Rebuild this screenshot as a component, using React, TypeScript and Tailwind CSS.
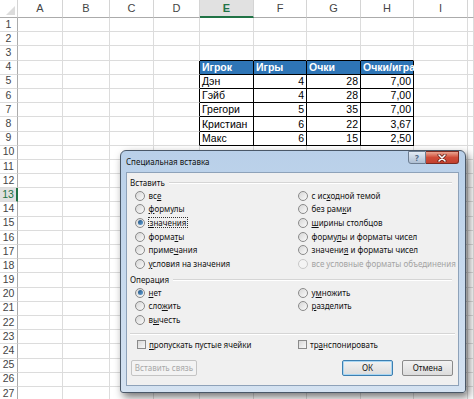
import React from "react";

const cols = ["A", "B", "C", "D", "E", "F", "G", "H", "I", ""];
const rows = Array.from({ length: 27 }, (_, i) => i + 1);

const table: Record<number, string[]> = {
  4: ["Игрок", "Игры", "Очки", "Очки/игра"],
  5: ["Дэн", "4", "28", "7,00"],
  6: ["Гэйб", "4", "28", "7,00"],
  7: ["Грегори", "5", "35", "7,00"],
  8: ["Кристиан", "6", "22", "3,67"],
  9: ["Макс", "6", "15", "2,50"],
};

function Cell({ r, c }: { r: number; c: number }) {
  const row = table[r];
  const inTable = !!row && c >= 4 && c <= 7;
  const text = inTable ? row[c - 4] : "";
  const rightBlack = r >= 4 && r <= 9 && c >= 3 && c <= 7;
  const bottomBlack = c >= 4 && c <= 7 && r >= 3 && r <= 9;
  const head = r === 4 && inTable;
  const left = c === 4 || head;

  return (
    <div
      className={[
        "flex items-center overflow-visible whitespace-nowrap border-r border-b px-[2px] text-[10.5px] leading-none",
        rightBlack ? "border-r-black" : "border-r-[#dcdcdc]",
        bottomBlack ? "border-b-black" : "border-b-[#dcdcdc]",
        head ? "bg-[#2e75b6] font-bold text-white" : "text-black",
        left ? "justify-start" : "justify-end",
      ].join(" ")}
    >
      {text}
    </div>
  );
}

function Radio({ checked, disabled }: { checked?: boolean; disabled?: boolean }) {
  return (
    <span
      className={[
        "flex size-[10px] shrink-0 items-center justify-center rounded-full border",
        disabled
          ? "border-[#c8c8c8] bg-[#f4f4f4]"
          : "border-[#8a8a8a] bg-gradient-to-br from-[#d6d6d6] to-[#fbfbfb]",
      ].join(" ")}
    >
      {checked && (
        <span className="size-[5px] rounded-full bg-gradient-to-br from-[#1c4f7e] to-[#6aa7da]" />
      )}
    </span>
  );
}

function Option({
  children,
  checked,
  disabled,
}: {
  children: React.ReactNode;
  checked?: boolean;
  disabled?: boolean;
}) {
  return (
    <div className="flex h-[13.6px] items-center gap-[3.5px] whitespace-nowrap">
      <Radio checked={checked} disabled={disabled} />
      <span className={disabled ? "text-[#a3a3a3]" : "text-[#111]"}>{children}</span>
    </div>
  );
}

function Check({ children }: { children: React.ReactNode }) {
  return (
    <div className="flex h-[12px] items-center gap-[3px] whitespace-nowrap">
      <span className="size-[9px] shrink-0 border border-[#8a8a8a] bg-gradient-to-br from-[#d8d8d8] to-[#f8f8f8]" />
      <span className="text-[#111]">{children}</span>
    </div>
  );
}

function GroupLabel({ children }: { children: React.ReactNode }) {
  return (
    <div className="flex h-[12px] items-center pl-[3px] pr-[6px]">
      <span className="text-[#111]">{children}</span>
      <span className="ml-[4px] h-[2px] flex-1 border-t border-b border-t-[#d5d5d5] border-b-white" />
    </div>
  );
}

function PasteSpecial() {
  return (
    <div className="absolute top-[150px] left-[120px] flex h-[243px] w-[346px] flex-col rounded-t-[6px] rounded-b-[3px] border border-[#4a5868] bg-gradient-to-b from-[#b9d0e9] to-[#d4e2f1] font-['Noto_Sans',sans-serif] text-[8px] shadow-[3px_4px_8px_rgba(0,0,0,0.55)]">
      {/* заголовок */}
      <div className="flex h-[21px] shrink-0">
        <span className="self-center pt-[1px] pl-[5px] text-[8px] text-[#111]">Специальная вставка</span>
        <div className="mr-[6px] ml-auto flex h-[13px]">
          <div className="flex w-[18px] items-center justify-center rounded-bl-[3px] border border-[#6c7d91] bg-gradient-to-b from-[#e3ebf5] to-[#aebfd3] text-[8px] font-bold text-[#4a6584]">
            ?
          </div>
          <div className="flex w-[33px] items-center justify-center rounded-br-[3px] border border-l-0 border-[#7b2a20] bg-gradient-to-b from-[#e9a491] via-[#cf4b38] to-[#c2402e]">
            <svg width="10" height="8" viewBox="0 0 10 8">
              <path d="M2 1 L8 7 M8 1 L2 7" stroke="#5a1a12" strokeWidth="3" strokeLinecap="round" />
              <path d="M2 1 L8 7 M8 1 L2 7" stroke="#fff" strokeWidth="1.6" strokeLinecap="round" />
            </svg>
          </div>
        </div>
      </div>

      {/* содержимое */}
      <div className="mr-[6px] mb-[6px] ml-[5px] flex flex-1 flex-col border border-[#8ea2b9] bg-[#f0f0f0]">
        <div className="mt-[4px]">
          <GroupLabel>Вставить</GroupLabel>
        </div>
        <div className="grid grid-cols-[163px_1fr] pl-[8px]">
          <div>
            <Option>
              вс<u>е</u>
            </Option>
            <Option>
              <u>ф</u>ормулы
            </Option>
            <div className="flex h-[13.6px] items-center gap-[2.5px]">
              <Radio checked />
              <span className="border border-dotted border-[#333] px-[1px] leading-[9px] text-[#111]">
                <u>з</u>начения
              </span>
            </div>
            <Option>
              форма<u>т</u>ы
            </Option>
            <Option>
              приме<u>ч</u>ания
            </Option>
            <Option>
              <u>у</u>словия на значения
            </Option>
          </div>
          <div>
            <Option>
              с ис<u>х</u>одной темой
            </Option>
            <Option>
              без рам<u>к</u>и
            </Option>
            <Option>
              <u>ш</u>ирины столбцов
            </Option>
            <Option>
              форму<u>л</u>ы и форматы чисел
            </Option>
            <Option>
              значени<u>я</u> и форматы чисел
            </Option>
            <Option disabled>все условные форматы объединения</Option>
          </div>
        </div>

        <div className="mt-[3.4px]">
          <GroupLabel>Операция</GroupLabel>
        </div>
        <div className="grid grid-cols-[163px_1fr] pl-[8px]">
          <div>
            <Option checked>
              <u>н</u>ет
            </Option>
            <Option>
              сло<u>ж</u>ить
            </Option>
            <Option>
              в<u>ы</u>честь
            </Option>
          </div>
          <div>
            <Option>
              у<u>м</u>ножить
            </Option>
            <Option>
              <u>р</u>азделить
            </Option>
          </div>
        </div>

        <div className="mx-[3px] mt-[6px] h-[2px] border-t border-b border-t-[#d5d5d5] border-b-white" />

        <div className="mt-[4px] grid grid-cols-[161px_1fr] pl-[10px]">
          <Check>
            <u>п</u>ропускать пустые ячейки
          </Check>
          <Check>
            тр<u>а</u>нспонировать
          </Check>
        </div>

        <div className="mt-[9px] flex h-[16px] pr-[5px] pl-[4px]">
          <button className="w-[66px] rounded-[2px] border border-[#c4c4c4] bg-[#f3f3f3] text-[#a8a8a8]">
            Вставить связь
          </button>
          <button className="ml-auto w-[51px] rounded-[2px] border border-[#3c7fb1] bg-gradient-to-b from-[#f2f2f2] to-[#dcdcdc] text-[#111] shadow-[inset_0_0_0_1px_#a8d6f3]">
            ОК
          </button>
          <button className="ml-[9px] w-[51px] rounded-[2px] border border-[#8a8a8a] bg-gradient-to-b from-[#f2f2f2] to-[#dcdcdc] text-[#111]">
            Отмена
          </button>
        </div>
      </div>
    </div>
  );
}

export default function App() {
  return (
    <div className="relative h-[399px] w-[474px] overflow-hidden bg-white font-['Liberation_Sans',Arial,sans-serif]">
      <div className="grid grid-cols-[18px_45px_47px_44px_46px_54px_53px_54px_53px_54px_1fr] grid-rows-[18px] auto-rows-[14.2px]">
        {/* угол */}
        <div className="relative border-r border-b border-r-[#d4d4d4] border-b-[#ababab] bg-white">
          <svg className="absolute right-[2px] bottom-[2px]" width="9" height="9" viewBox="0 0 9 9">
            <path d="M9 0 L9 9 L0 9 Z" fill="#dcdcdc" />
          </svg>
        </div>
        {cols.map((c, i) => (
          <div
            key={"h" + i}
            className={
              i === 4
                ? "flex items-center justify-center border-r border-b-2 border-r-[#d4d4d4] border-b-[#217346] bg-[#e1e1e1] text-[11px] font-bold text-[#217346]"
                : "flex items-center justify-center border-r border-b border-r-[#d4d4d4] border-b-[#ababab] bg-white text-[11px] text-[#444]"
            }
          >
            {c}
          </div>
        ))}
        {rows.map((r) => (
          <React.Fragment key={r}>
            <div
              className={
                r === 13
                  ? "flex items-center justify-center border-r-2 border-b border-r-[#217346] border-b-[#dcdcdc] bg-[#e1e1e1] text-[10.5px] text-[#217346]"
                  : "flex items-center justify-center border-r border-b border-r-[#ababab] border-b-[#dcdcdc] bg-white text-[10.5px] text-[#444]"
              }
            >
              {r}
            </div>
            {cols.map((_, c) => (
              <Cell key={c} r={r} c={c} />
            ))}
          </React.Fragment>
        ))}
      </div>
      <PasteSpecial />
    </div>
  );
}
